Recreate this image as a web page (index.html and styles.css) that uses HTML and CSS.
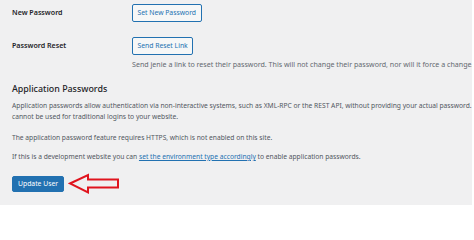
FILE: index.html
```html
<!DOCTYPE html>
<html lang="en">
<head>
<meta charset="utf-8">
<title>Edit User</title>
<link rel="stylesheet" href="styles.css">
</head>
<body>
<div class="screen">
  <div class="content">
    <div class="form-row row-first">
      <div class="label">New Password</div>
      <div class="field"><button class="btn-secondary btn-set" type="button">Set New Password</button></div>
    </div>
    <div class="form-row row-second">
      <div class="label">Password Reset</div>
      <div class="field">
        <button class="btn-secondary btn-reset" type="button">Send Reset Link</button>
        <p class="description">Send jenie a link to reset their password. This will not change their password, nor will it force a change.</p>
      </div>
    </div>
    <h2 class="heading">Application Passwords</h2>
    <p class="para para-first">Application passwords allow authentication via non-interactive systems, such as XML-RPC or the REST API, without providing your actual password. Application passwords can be easily revoked. They cannot be used for traditional logins to your website.</p>
    <p class="para para-https">The application password feature requires HTTPS, which is not enabled on this site.</p>
    <p class="para para-dev">If this is a development website you can <a href="#" class="link">set the environment type accordingly</a> to enable application passwords.</p>
    <div class="submit-row">
      <button class="btn-primary" type="submit">Update User</button>
      <svg class="arrow" width="54" height="22" viewBox="0 0 54 22" aria-hidden="true">
        <polygon points="2,10.5 20,2 20,6.5 50,6.5 50,14.5 20,14.5 20,19.5" fill="none" stroke="#e0141e" stroke-width="2" stroke-linejoin="miter"/>
      </svg>
    </div>
  </div>
</div>
</body>
</html>
```

FILE: styles.css
```css
html, body {
  margin: 0;
  padding: 0;
  background: #ffffff;
}

.screen {
  width: 472px;
  height: 205px;
  background: #f0f0f1;
  overflow: hidden;
  font-family: "Noto Sans", "Open Sans", sans-serif;
  color: #3c434a;
}

.content {
  width: 660px;
  padding-left: 12px;
}

.form-row {
  display: flex;
  align-items: flex-start;
}

.row-first {
  padding-top: 4px;
}

.row-second {
  margin-top: 15px;
}

.label {
  width: 120px;
  flex: none;
  font-size: 7.1px;
  font-weight: 600;
  color: #1d2327;
  line-height: 17px;
}

.field {
  display: flex;
  flex-direction: column;
  align-items: flex-start;
}

.btn-secondary {
  height: 18px;
  border: 1px solid #2271b1;
  border-radius: 2px;
  background: #f6f7f7;
  color: #2271b1;
  font-family: inherit;
  font-size: 6.8px;
  line-height: 16px;
}

.btn-set {
  padding: 0 4.5px;
}

.btn-reset {
  padding: 0 4.5px;
}

.description {
  margin: 4px 0 0;
  font-size: 7.1px;
  line-height: 11px;
  color: #646970;
  white-space: nowrap;
}

.heading {
  margin: 12px 0 0;
  font-size: 8.9px;
  font-weight: 500;
  line-height: 14px;
  color: #1d2327;
}

.para {
  width: 640px;
  margin: 0;
  font-size: 6.7px;
  line-height: 11px;
  color: #50575e;
}

.para-first {
  margin-top: 4px;
}

.para-https {
  margin-top: 10px;
}

.para-dev {
  margin-top: 8px;
}

.link {
  color: #2271b1;
  text-decoration: underline;
}

.submit-row {
  display: flex;
  align-items: center;
  gap: 4px;
  margin-top: 11px;
}

.btn-primary {
  height: 16px;
  padding: 0 5px;
  border: 1px solid #2271b1;
  border-radius: 2px;
  background: #2271b1;
  color: #ffffff;
  font-family: inherit;
  font-size: 6.8px;
  line-height: 14px;
}

.arrow {
  display: block;
}
```
